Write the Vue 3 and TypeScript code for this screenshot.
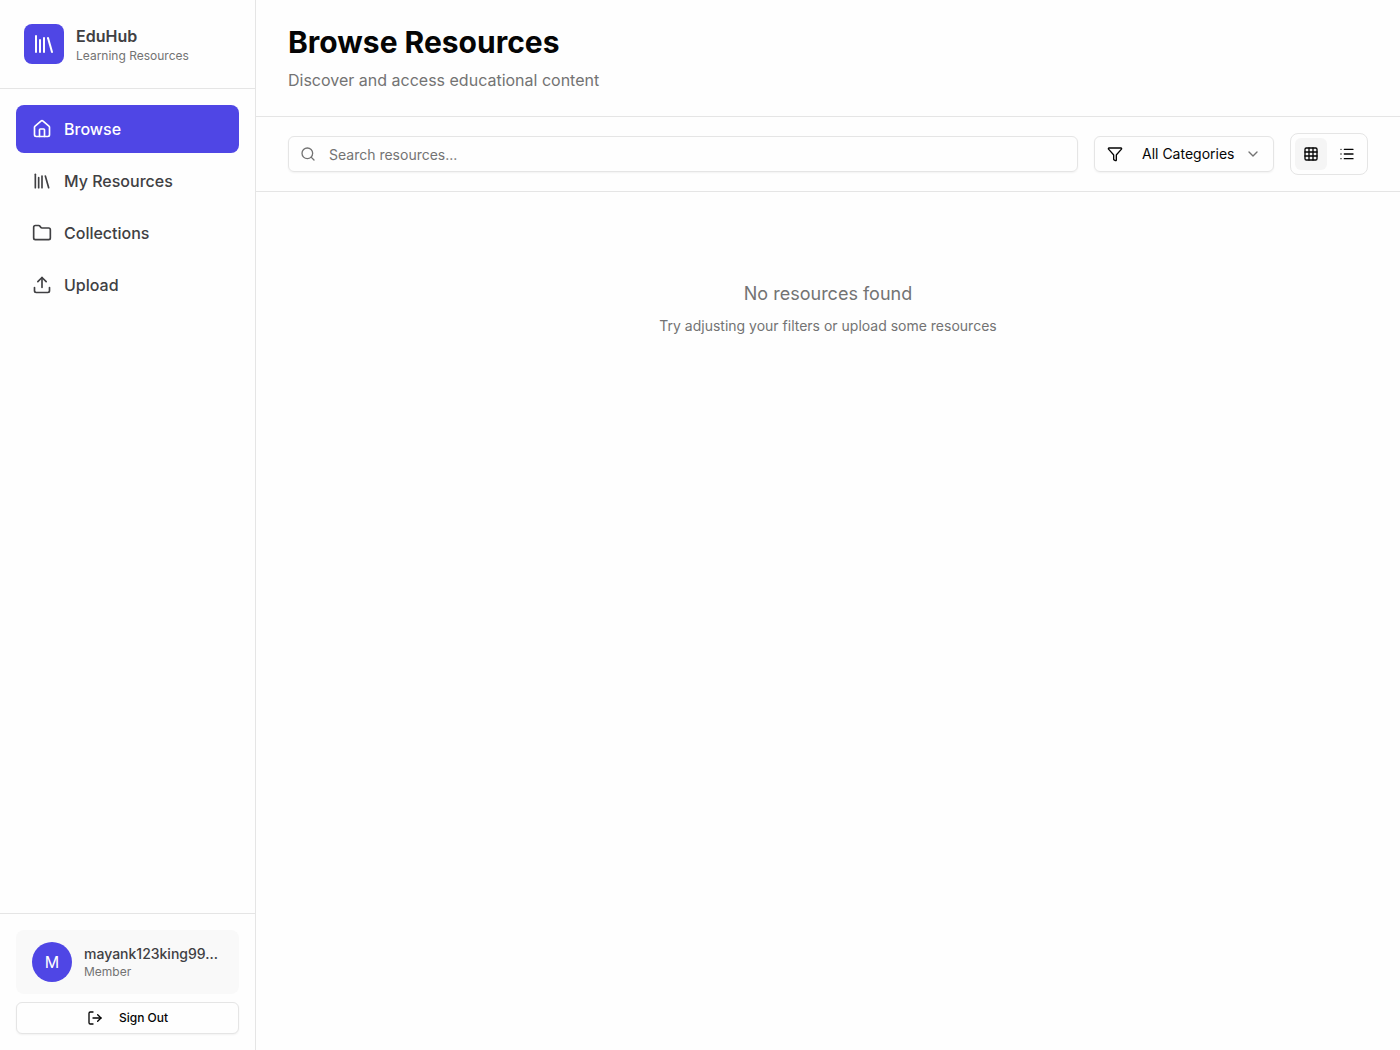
<script setup lang="ts">
import { ref } from 'vue'

interface NavItem {
  label: string
  paths: string[]
}

const libraryPaths = ['m16 6 4 14', 'M12 6v14', 'M8 8v12', 'M4 4v16']

const navItems: NavItem[] = [
  {
    label: 'Browse',
    paths: [
      'M15 21v-8a1 1 0 0 0-1-1h-4a1 1 0 0 0-1 1v8',
      'M3 10a2 2 0 0 1 .709-1.528l7-5.999a2 2 0 0 1 2.582 0l7 5.999A2 2 0 0 1 21 10v9a2 2 0 0 1-2 2H5a2 2 0 0 1-2-2z',
    ],
  },
  { label: 'My Resources', paths: libraryPaths },
  {
    label: 'Collections',
    paths: [
      'M20 20a2 2 0 0 0 2-2V8a2 2 0 0 0-2-2h-7.9a2 2 0 0 1-1.69-.9L9.6 3.9A2 2 0 0 0 7.93 3H4a2 2 0 0 0-2 2v13a2 2 0 0 0 2 2Z',
    ],
  },
  {
    label: 'Upload',
    paths: ['M12 3v12', 'm17 8-5-5-5 5', 'M21 15v4a2 2 0 0 1-2 2H5a2 2 0 0 1-2-2v-4'],
  },
]

const current = ref('Browse')
const search = ref('')
const category = ref('all')
const view = ref<'grid' | 'list'>('grid')
</script>

<template>
  <div class="app">
    <aside class="sidebar">
      <div class="brand">
        <div class="brand-mark">
          <svg class="icon icon-lg" viewBox="0 0 24 24" aria-hidden="true">
            <path v-for="d in libraryPaths" :key="d" :d="d" />
          </svg>
        </div>
        <div>
          <div class="brand-name">EduHub</div>
          <div class="caption">Learning Resources</div>
        </div>
      </div>

      <nav class="nav">
        <a
          v-for="item in navItems"
          :key="item.label"
          href="#"
          class="nav-link"
          :class="{ active: item.label === current }"
          @click.prevent="current = item.label"
        >
          <svg class="icon icon-md" viewBox="0 0 24 24" aria-hidden="true">
            <path v-for="d in item.paths" :key="d" :d="d" />
          </svg>
          {{ item.label }}
        </a>
      </nav>

      <div class="account">
        <div class="user">
          <div class="avatar">M</div>
          <div class="user-text">
            <div class="user-name">mayank123king99…</div>
            <div class="caption">Member</div>
          </div>
        </div>
        <button type="button" class="sign-out">
          <svg class="icon" viewBox="0 0 24 24" aria-hidden="true">
            <path d="m16 17 5-5-5-5" />
            <path d="M21 12H9" />
            <path d="M9 21H5a2 2 0 0 1-2-2V5a2 2 0 0 1 2-2h4" />
          </svg>
          Sign Out
        </button>
      </div>
    </aside>

    <main class="main">
      <header class="page-header">
        <h1>Browse Resources</h1>
        <p>Discover and access educational content</p>
      </header>

      <div class="toolbar">
        <div class="search">
          <svg class="icon field-icon muted" viewBox="0 0 24 24" aria-hidden="true">
            <path d="m21 21-4.34-4.34" />
            <circle cx="11" cy="11" r="8" />
          </svg>
          <input v-model="search" type="search" aria-label="Search resources" placeholder="Search resources..." />
        </div>

        <div class="category">
          <svg class="icon field-icon" viewBox="0 0 24 24" aria-hidden="true">
            <path
              d="M10 20a1 1 0 0 0 .553.895l2 1A1 1 0 0 0 14 21v-7a2 2 0 0 1 .517-1.341L21.74 4.67A1 1 0 0 0 21 3H3a1 1 0 0 0-.742 1.67l7.225 7.989A2 2 0 0 1 10 14z"
            />
          </svg>
          <select v-model="category" aria-label="Category">
            <option value="all">All Categories</option>
          </select>
          <svg class="icon chevron muted" viewBox="0 0 24 24" aria-hidden="true">
            <path d="m6 9 6 6 6-6" />
          </svg>
        </div>

        <div class="view-toggle">
          <button type="button" aria-label="Grid view" :class="{ active: view === 'grid' }" @click="view = 'grid'">
            <svg class="icon" viewBox="0 0 24 24" aria-hidden="true">
              <rect width="18" height="18" x="3" y="3" rx="2" />
              <path d="M3 9h18" />
              <path d="M3 15h18" />
              <path d="M9 3v18" />
              <path d="M15 3v18" />
            </svg>
          </button>
          <button type="button" aria-label="List view" :class="{ active: view === 'list' }" @click="view = 'list'">
            <svg class="icon" viewBox="0 0 24 24" aria-hidden="true">
              <path d="M3 5h.01" />
              <path d="M3 12h.01" />
              <path d="M3 19h.01" />
              <path d="M8 5h13" />
              <path d="M8 12h13" />
              <path d="M8 19h13" />
            </svg>
          </button>
        </div>
      </div>

      <section class="empty">
        <p class="empty-title">No resources found</p>
        <p class="empty-hint">Try adjusting your filters or upload some resources</p>
      </section>
    </main>
  </div>
</template>

<style>
body {
  margin: 0;
  background: #fefefe;
}
</style>

<style scoped>
.app,
.app * {
  box-sizing: border-box;
}

.app {
  display: flex;
  min-height: 100vh;
  font-family: Inter, "Liberation Sans", sans-serif;
  font-size: 16px;
  line-height: 24px;
  color: #050505;
}

h1,
p {
  margin: 0;
}

button,
input,
select {
  font-family: inherit;
  color: inherit;
}

.icon {
  width: 16px;
  height: 16px;
  flex-shrink: 0;
  fill: none;
  stroke: currentColor;
  stroke-width: 2;
  stroke-linecap: round;
  stroke-linejoin: round;
}

.icon-md {
  width: 20px;
  height: 20px;
}

.icon-lg {
  width: 24px;
  height: 24px;
}

.muted,
.caption {
  color: #737373;
}

.caption {
  font-size: 12px;
  line-height: 16px;
}

.sidebar {
  display: flex;
  flex-direction: column;
  flex-shrink: 0;
  width: 256px;
  border-right: 1px solid #e5e5e5;
  color: #404043;
}

.brand {
  display: flex;
  align-items: center;
  gap: 12px;
  padding: 24px;
  border-bottom: 1px solid #e5e5e5;
}

.brand-mark {
  display: grid;
  place-items: center;
  width: 40px;
  height: 40px;
  border-radius: 8px;
  background: #4f46e5;
  color: #fff;
}

.brand-name {
  font-weight: 600;
}

.nav {
  display: flex;
  flex: 1;
  flex-direction: column;
  gap: 4px;
  padding: 16px;
}

.nav-link {
  display: flex;
  align-items: center;
  gap: 12px;
  padding: 12px 16px;
  border-radius: 8px;
  color: inherit;
  font-weight: 500;
  text-decoration: none;
}

.nav-link.active {
  background: #4f46e5;
  color: #fff;
}

.account {
  display: flex;
  flex-direction: column;
  gap: 8px;
  padding: 16px;
  border-top: 1px solid #e5e5e5;
}

.user {
  display: flex;
  align-items: center;
  gap: 12px;
  padding: 12px 16px;
  border-radius: 8px;
  background: #f9f9f9;
}

.avatar {
  display: grid;
  place-items: center;
  flex-shrink: 0;
  width: 40px;
  height: 40px;
  border-radius: 50%;
  background: #4f46e5;
  color: #fff;
}

.user-text {
  min-width: 0;
}

.user-name {
  overflow: hidden;
  font-size: 14px;
  font-weight: 500;
  line-height: 20px;
  text-overflow: ellipsis;
  white-space: nowrap;
}

.sign-out {
  display: flex;
  align-items: center;
  justify-content: center;
  gap: 16px;
  height: 32px;
  border: 1px solid #e5e5e5;
  border-radius: 6px;
  background: #fefefe;
  box-shadow: 0 1px 2px rgba(0, 0, 0, 0.05);
  color: #050505;
  font-size: 12px;
  font-weight: 500;
  line-height: 16px;
}

.main {
  flex: 1;
  min-width: 0;
}

.page-header {
  display: flex;
  flex-direction: column;
  gap: 8px;
  padding: 24px 32px;
  border-bottom: 1px solid #e5e5e5;
}

h1 {
  font-size: 30px;
  font-weight: 700;
  line-height: 36px;
}

.page-header p {
  color: #737373;
}

.toolbar {
  display: flex;
  align-items: center;
  gap: 16px;
  padding: 16px 32px;
  border-bottom: 1px solid #e5e5e5;
}

.search,
.category {
  position: relative;
  display: flex;
  align-items: center;
}

.search {
  flex: 1;
}

.category {
  width: 180px;
}

.field-icon {
  position: absolute;
  left: 12px;
  pointer-events: none;
}

.category .field-icon,
.chevron {
  margin: 0 1px;
}

.chevron {
  position: absolute;
  right: 12px;
  pointer-events: none;
}

.search input,
.category select {
  width: 100%;
  height: 36px;
  border: 1px solid #e5e5e5;
  border-radius: 6px;
  background: transparent;
  box-shadow: 0 1px 2px rgba(0, 0, 0, 0.05);
  font-size: 14px;
  appearance: none;
}

.search input {
  padding: 0 12px 0 40px;
}

.search input::placeholder {
  color: #737373;
}

.category select {
  padding: 0 32px 2px 47px;
}

.view-toggle {
  display: flex;
  gap: 4px;
  padding: 4px;
  border: 1px solid #e5e5e5;
  border-radius: 8px;
}

.view-toggle button {
  display: grid;
  place-items: center;
  width: 32px;
  height: 32px;
  padding: 0;
  border: 0;
  border-radius: 6px;
  background: transparent;
}

.view-toggle button.active {
  background: #f5f5f5;
}

.empty {
  display: flex;
  flex-direction: column;
  gap: 8px;
  padding: 88px 32px;
  color: #737373;
  text-align: center;
}

.empty-title {
  font-size: 18px;
  line-height: 28px;
}

.empty-hint {
  font-size: 14px;
  line-height: 20px;
}
</style>
